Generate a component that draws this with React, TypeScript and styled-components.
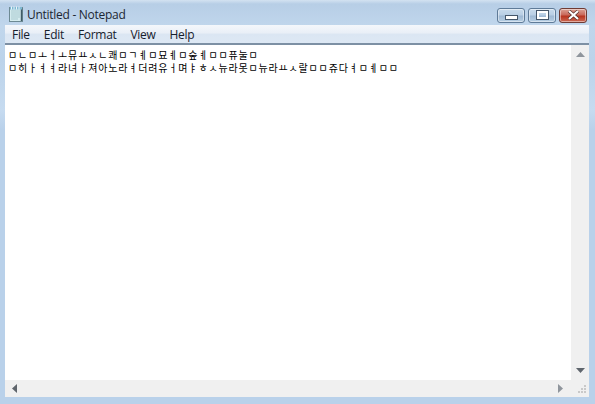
import styled, { createGlobalStyle } from "styled-components";

const GlobalStyle = createGlobalStyle`
  html, body {
    margin: 0;
    padding: 0;
    background: #b9d1ea;
  }
`;

const Window = styled.div`
  width: 595px;
  height: 404px;
  box-sizing: border-box;
  display: flex;
  flex-direction: column;
  padding: 0 6px 7px 5px;
  overflow: hidden;
  background: linear-gradient(180deg, #d3e2f1 0, #b7cee6 4px, #c0d6ec 26px, #bcd3ea 60px, #c6dbf0 110px, #b9d1ea 130px, #b9d1ea 100%);
  font-family: "Open Sans", "Liberation Sans", sans-serif;
`;

const TitleBar = styled.div`
  height: 25px;
  flex: none;
  display: flex;
  align-items: center;
  padding: 0 2px 0 4px;
`;

const TitleIcon = styled.svg`
  width: 14px;
  height: 16px;
  flex: none;
  margin-top: 3px;
`;

const Title = styled.div`
  margin-left: 4px;
  margin-top: 4px;
  font-size: 12px;
  letter-spacing: -0.28px;
  color: #1c2733;
  flex: 1;
`;

const Controls = styled.div`
  display: flex;
  gap: 3px;
  margin-top: 5px;
`;

const CtrlButton = styled.div<{ $close?: boolean }>`
  width: 28px;
  height: 15px;
  box-sizing: border-box;
  border-radius: 3px;
  border: 1px solid ${({ $close }) => ($close ? "#6f3b34" : "#5f7b98")};
  box-shadow: inset 0 0 0 1px rgba(255, 255, 255, 0.45);
  display: flex;
  align-items: center;
  justify-content: center;
  background: ${({ $close }) =>
    $close
      ? "linear-gradient(180deg, #dca295 0, #c9695b 45%, #b8341f 55%, #cc6a55 100%)"
      : "linear-gradient(180deg, #c9dbec 0, #b9cfe5 45%, #9fb9d4 55%, #b7cfe4 100%)"};
`;

const MinGlyph = styled.div`
  width: 11px;
  height: 3px;
  margin-top: 5px;
  background: #fff;
  border: 1px solid #44566a;
`;

const MaxGlyph = styled.div`
  width: 7px;
  height: 4px;
  background: transparent;
  border: 2px solid #fff;
  outline: 1px solid #44566a;
`;

const CloseGlyph = styled.svg`
  width: 13px;
  height: 10px;
`;

const MenuBar = styled.div`
  height: 18px;
  flex: none;
  display: flex;
  align-items: center;
  padding-left: 7px;
  gap: 14px;
  background: linear-gradient(180deg, #f4f7fb 0, #e9eff7 45%, #dbe6f3 50%, #dde8f4 100%);
  border-bottom: 2px solid #7d90a4;
`;

const MenuItem = styled.span`
  font-size: 12px;
  letter-spacing: -0.3px;
  color: #16202c;
`;

const Client = styled.div`
  flex: 1;
  min-height: 0;
  display: grid;
  grid-template-columns: 1fr 18px;
  grid-template-rows: 1fr 17px;
  background: #fff;
`;

const Editor = styled.div`
  padding: 4px 0 0 3px;
  font-family: "Noto Sans CJK KR", "Liberation Sans", sans-serif;
  font-size: 10px;
  letter-spacing: 0.82px;
  line-height: 12.5px;
  color: #000;
  white-space: pre;
  overflow: hidden;
`;

const ScrollTrack = styled.div<{ $horizontal?: boolean }>`
  display: flex;
  flex-direction: ${({ $horizontal }) => ($horizontal ? "row" : "column")};
  justify-content: space-between;
  align-items: center;
  background: #f0f0f0;
  padding: ${({ $horizontal }) => ($horizontal ? "0 6px 0 5px" : "5px 0 5px 0")};
`;

const Corner = styled.div`
  background: #f0f0f0;
`;

const Arrow = styled.svg`
  width: 9px;
  height: 9px;
  flex: none;
`;

const Grip = styled.svg`
  width: 18px;
  height: 17px;
`;

function NotepadIcon() {
  return (
    <TitleIcon viewBox="0 0 14 16">
      <rect x="0.5" y="1.5" width="13" height="14" fill="#cfe6ea" stroke="#6d8a94" />
      <rect x="1" y="3" width="11" height="12" fill="#d5ecef" />
      <path d="M12.5 2v13" stroke="#3f5a66" strokeWidth="1.5" />
      <path d="M1 1h12v2.5H1z" fill="#7fb8d2" />
      <path d="M2 5h9M2 7h9M2 9h9M2 11h9M2 13h7" stroke="#a9c9cf" />
      <path d="M2.5 0.5v3M5 0.5v3M7.5 0.5v3M10 0.5v3" stroke="#e8f4fa" />
    </TitleIcon>
  );
}

export default function App() {
  return (
    <>
      <GlobalStyle />
      <Window>
        <TitleBar>
          <NotepadIcon />
          <Title>Untitled - Notepad</Title>
          <Controls>
            <CtrlButton>
              <MinGlyph />
            </CtrlButton>
            <CtrlButton>
              <MaxGlyph />
            </CtrlButton>
            <CtrlButton $close>
              <CloseGlyph viewBox="0 0 13 10">
                <path d="M2 1l9 8M11 1l-9 8" stroke="#4d2a26" strokeWidth="3.4" />
                <path d="M2 1l9 8M11 1l-9 8" stroke="#fff" strokeWidth="2.2" />
              </CloseGlyph>
            </CtrlButton>
          </Controls>
        </TitleBar>
        <MenuBar>
          <MenuItem>File</MenuItem>
          <MenuItem>Edit</MenuItem>
          <MenuItem>Format</MenuItem>
          <MenuItem>View</MenuItem>
          <MenuItem>Help</MenuItem>
        </MenuBar>
        <Client>
          <Editor>
            {"ㅁㄴㅁㅗㅓㅗ뮤ㅛㅅㄴ쾌ㅁㄱㅖㅁ묘ㅖㅁ숲ㅖㅁㅁ퓨눌ㅁ\nㅁ히ㅏㅕㅕ라녀ㅏ져아노라ㅕ더려유ㅓ며ㅑㅎㅅ뉴라못ㅁ뉴라ㅛㅅ랄ㅁㅁ쥬다ㅕㅁㅖㅁㅁ"}
          </Editor>
          <ScrollTrack>
            <Arrow viewBox="0 0 9 9">
              <path d="M4.5 2L9 7H0z" fill="#8f959c" />
            </Arrow>
            <Arrow viewBox="0 0 9 9">
              <path d="M4.5 7L0 2h9z" fill="#5f656c" />
            </Arrow>
          </ScrollTrack>
          <ScrollTrack $horizontal>
            <Arrow viewBox="0 0 9 9">
              <path d="M2 4.5L7 0v9z" fill="#5f656c" />
            </Arrow>
            <Arrow viewBox="0 0 9 9">
              <path d="M7 4.5L2 0v9z" fill="#8f959c" />
            </Arrow>
          </ScrollTrack>
          <Corner>
            <Grip viewBox="0 0 18 17">
              <path d="M13 5h2v2h-2zM10 8h2v2h-2zM13 8h2v2h-2zM7 11h2v2H7zM10 11h2v2h-2zM13 11h2v2h-2z" fill="#c9c9c9" />
            </Grip>
          </Corner>
        </Client>
      </Window>
    </>
  );
}
